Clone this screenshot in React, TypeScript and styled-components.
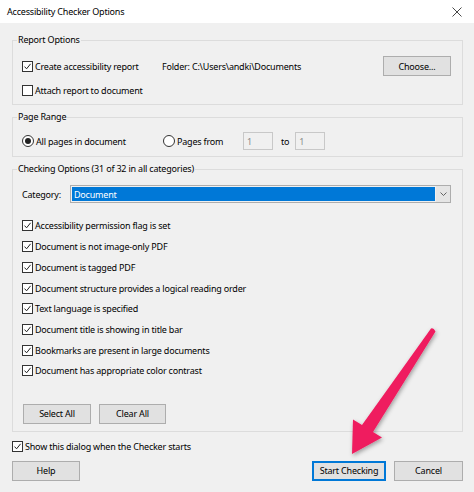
import { FC, ReactNode } from 'react'
import styled, { createGlobalStyle } from 'styled-components'

const GlobalStyle = createGlobalStyle`
  html, body {
    margin: 0;
    padding: 0;
    background: #fff;
  }

  body {
    color: #000;
    font-family: 'Noto Sans', 'Open Sans', sans-serif;
    font-size: 9px;
    letter-spacing: -0.2px;
  }
`

const checks = [
  'Accessibility permission flag is set',
  'Document is not image-only PDF',
  'Document is tagged PDF',
  'Document structure provides a logical reading order',
  'Text language is specified',
  'Document title is showing in title bar',
  'Bookmarks are present in large documents',
  'Document has appropriate color contrast',
]

const CheckBox: FC<{ checked?: boolean; children: ReactNode; width?: number }> = ({ checked, children, width }) => (
  <CheckItem $width={width}>
    <Box>
      {checked && (
        <svg width="9" height="9" viewBox="0 0 9 9">
          <path d="M1.5 4.6 L3.6 6.8 L7.6 1.8" fill="none" stroke="#222" strokeWidth="1" />
        </svg>
      )}
    </Box>
    <span>{children}</span>
  </CheckItem>
)

const Radio: FC<{ checked?: boolean; children: ReactNode; width?: number }> = ({ checked, children, width }) => (
  <CheckItem $width={width}>
    <Circle>{checked && <Dot />}</Circle>
    <span>{children}</span>
  </CheckItem>
)

const Arrow: FC = () => (
  <Overlay width="474" height="492" viewBox="0 0 474 492">
    <defs>
      <filter id="arrowShadow" x="-20%" y="-20%" width="140%" height="140%">
        <feDropShadow dx="1" dy="2" stdDeviation="2" floodColor="#000" floodOpacity="0.35" />
      </filter>
    </defs>
    <path
      d="M431 328.5 Q433.5 327.5 435.5 331.5 L373 432 L382 437.5 L352 454 L353 419.5 L362 425 Z"
      fill="#ef1c5e"
      filter="url(#arrowShadow)"
    />
  </Overlay>
)

export default function App() {
  return (
    <>
      <GlobalStyle />
      <Window>
        <TitleBar>
          <span>Accessibility Checker Options</span>
          <svg width="10" height="10" viewBox="0 0 10 10">
            <path d="M0.5 0.5 L9.5 9.5 M9.5 0.5 L0.5 9.5" stroke="#333" strokeWidth="0.9" />
          </svg>
        </TitleBar>

        <Body>
          <Group $top={0} $pad="10px 11px 4px 9px">
            <Legend>Report Options</Legend>
            <Row $h={20}>
              <CheckBox checked width={140}>Create accessibility report</CheckBox>
              <span>Folder: C:\Users\andki\Documents</span>
              <Button $w={68} $push>Choose...</Button>
            </Row>
            <Row $h={20} $top={4}>
              <CheckBox>Attach report to document</CheckBox>
            </Row>
          </Group>

          <Group $top={6} $pad="9px 11px 6px 9px">
            <Legend>Page Range</Legend>
            <Row $h={18}>
              <Radio checked width={141}>All pages in document</Radio>
              <Radio width={80}>Pages from</Radio>
              <PageInput defaultValue="1" disabled />
              <To>to</To>
              <PageInput defaultValue="1" disabled />
            </Row>
          </Group>

          <Group $top={6} $pad="10px 11px 7px 9px">
            <Legend>Checking Options (31 of 32 in all categories)</Legend>
            <Row $h={18}>
              <CategoryLabel>Category:</CategoryLabel>
              <Select>
                <Selected>Document</Selected>
                <DropButton>
                  <svg width="7" height="4" viewBox="0 0 7 4">
                    <path d="M0.5 0.5 L3.5 3.5 L6.5 0.5" fill="none" stroke="#555" strokeWidth="0.9" />
                  </svg>
                </DropButton>
              </Select>
            </Row>

            <CheckList>
              {checks.map((label) => (
                <CheckRow key={label}>
                  <CheckBox checked>{label}</CheckBox>
                </CheckRow>
              ))}
            </CheckList>

            <ButtonRow>
              <Button $w={68}>Select All</Button>
              <Button $w={67}>Clear All</Button>
            </ButtonRow>
          </Group>

          <Row $h={20} $top={5}>
            <CheckBox checked>Show this dialog when the Checker starts</CheckBox>
          </Row>

          <Footer>
            <Button $w={68}>Help</Button>
            <Actions>
              <Button $w={74} $primary>Start Checking</Button>
              <Button $w={69}>Cancel</Button>
            </Actions>
          </Footer>
        </Body>

        <Arrow />
      </Window>
    </>
  )
}

const Window = styled.div`
  display: flex;
  flex-direction: column;
  height: 492px;
  overflow: hidden;
  position: relative;
  width: 474px;
`

const TitleBar = styled.div`
  align-items: center;
  background: #fff;
  display: flex;
  flex-shrink: 0;
  height: 23px;
  justify-content: space-between;
  padding: 0 12px 0 7px;
`

const Body = styled.div`
  background: #f0f0f0;
  display: flex;
  flex: 1;
  flex-direction: column;
  padding: 11px 11px 0 12px;
`

const Group = styled.fieldset<{ $top: number; $pad: string }>`
  border: 1px solid #dcdcdc;
  display: flex;
  flex-direction: column;
  margin: ${({ $top }) => $top}px 0 0;
  min-width: 0;
  padding: ${({ $pad }) => $pad};
`

const Legend = styled.legend`
  line-height: 12px;
  margin-left: -5px;
  padding: 0 1px;
`

const Row = styled.div<{ $h: number; $top?: number }>`
  align-items: center;
  display: flex;
  height: ${({ $h }) => $h}px;
  margin-top: ${({ $top }) => $top ?? 0}px;
`

const CheckItem = styled.label<{ $width?: number }>`
  align-items: center;
  display: inline-flex;
  flex-shrink: 0;
  gap: 2px;
  white-space: nowrap;
  width: ${({ $width }) => ($width ? `${$width}px` : 'auto')};
`

const Box = styled.span`
  align-items: center;
  background: #fff;
  border: 1px solid #333;
  box-sizing: border-box;
  display: inline-flex;
  height: 11px;
  justify-content: center;
  width: 11px;
`

const Circle = styled.span`
  align-items: center;
  background: #fff;
  border: 1px solid #333;
  border-radius: 50%;
  box-sizing: border-box;
  display: inline-flex;
  height: 12px;
  justify-content: center;
  width: 12px;
`

const Dot = styled.span`
  background: #222;
  border-radius: 50%;
  height: 6px;
  width: 6px;
`

const Button = styled.button<{ $w: number; $primary?: boolean; $push?: boolean }>`
  background: #e1e1e1;
  border: 1px solid ${({ $primary }) => ($primary ? '#0078d7' : '#adadad')};
  box-shadow: ${({ $primary }) => ($primary ? 'inset 0 0 0 1px #0078d7' : 'none')};
  box-sizing: border-box;
  color: #000;
  font: inherit;
  height: 20px;
  letter-spacing: inherit;
  margin-left: ${({ $push }) => ($push ? 'auto' : '0')};
  padding: 0;
  width: ${({ $w }) => $w}px;
`

const PageInput = styled.input`
  background: #f0f0f0;
  border: 1px solid #c8c8c8;
  box-sizing: border-box;
  color: #8a8a8a;
  font: inherit;
  height: 18px;
  padding: 0 0 0 3px;
  width: 30px;
`

const To = styled.span`
  margin: 0 6px 0 8px;
`

const CategoryLabel = styled.span`
  width: 48px;
`

const Select = styled.div`
  border: 1px solid #adadad;
  box-sizing: border-box;
  display: flex;
  height: 18px;
  width: 381px;
`

const Selected = styled.div`
  align-items: center;
  background: #0078d7;
  color: #fff;
  display: flex;
  flex: 1;
  margin: 1px;
  padding-left: 2px;
`

const DropButton = styled.div`
  align-items: center;
  background: #e5e5e5;
  display: flex;
  justify-content: center;
  width: 14px;
`

const CheckList = styled.div`
  display: flex;
  flex-direction: column;
  margin-top: 12.6px;
`

const CheckRow = styled.div`
  align-items: center;
  display: flex;
  height: 20.7px;
`

const ButtonRow = styled.div`
  display: flex;
  gap: 8px;
  margin-top: 22.6px;
  padding-left: 1px;
`

const Footer = styled.div`
  align-items: center;
  display: flex;
  justify-content: space-between;
  margin-top: 4px;
`

const Actions = styled.div`
  display: flex;
  gap: 8px;
`

const Overlay = styled.svg`
  left: 0;
  pointer-events: none;
  position: absolute;
  top: 0;
`
